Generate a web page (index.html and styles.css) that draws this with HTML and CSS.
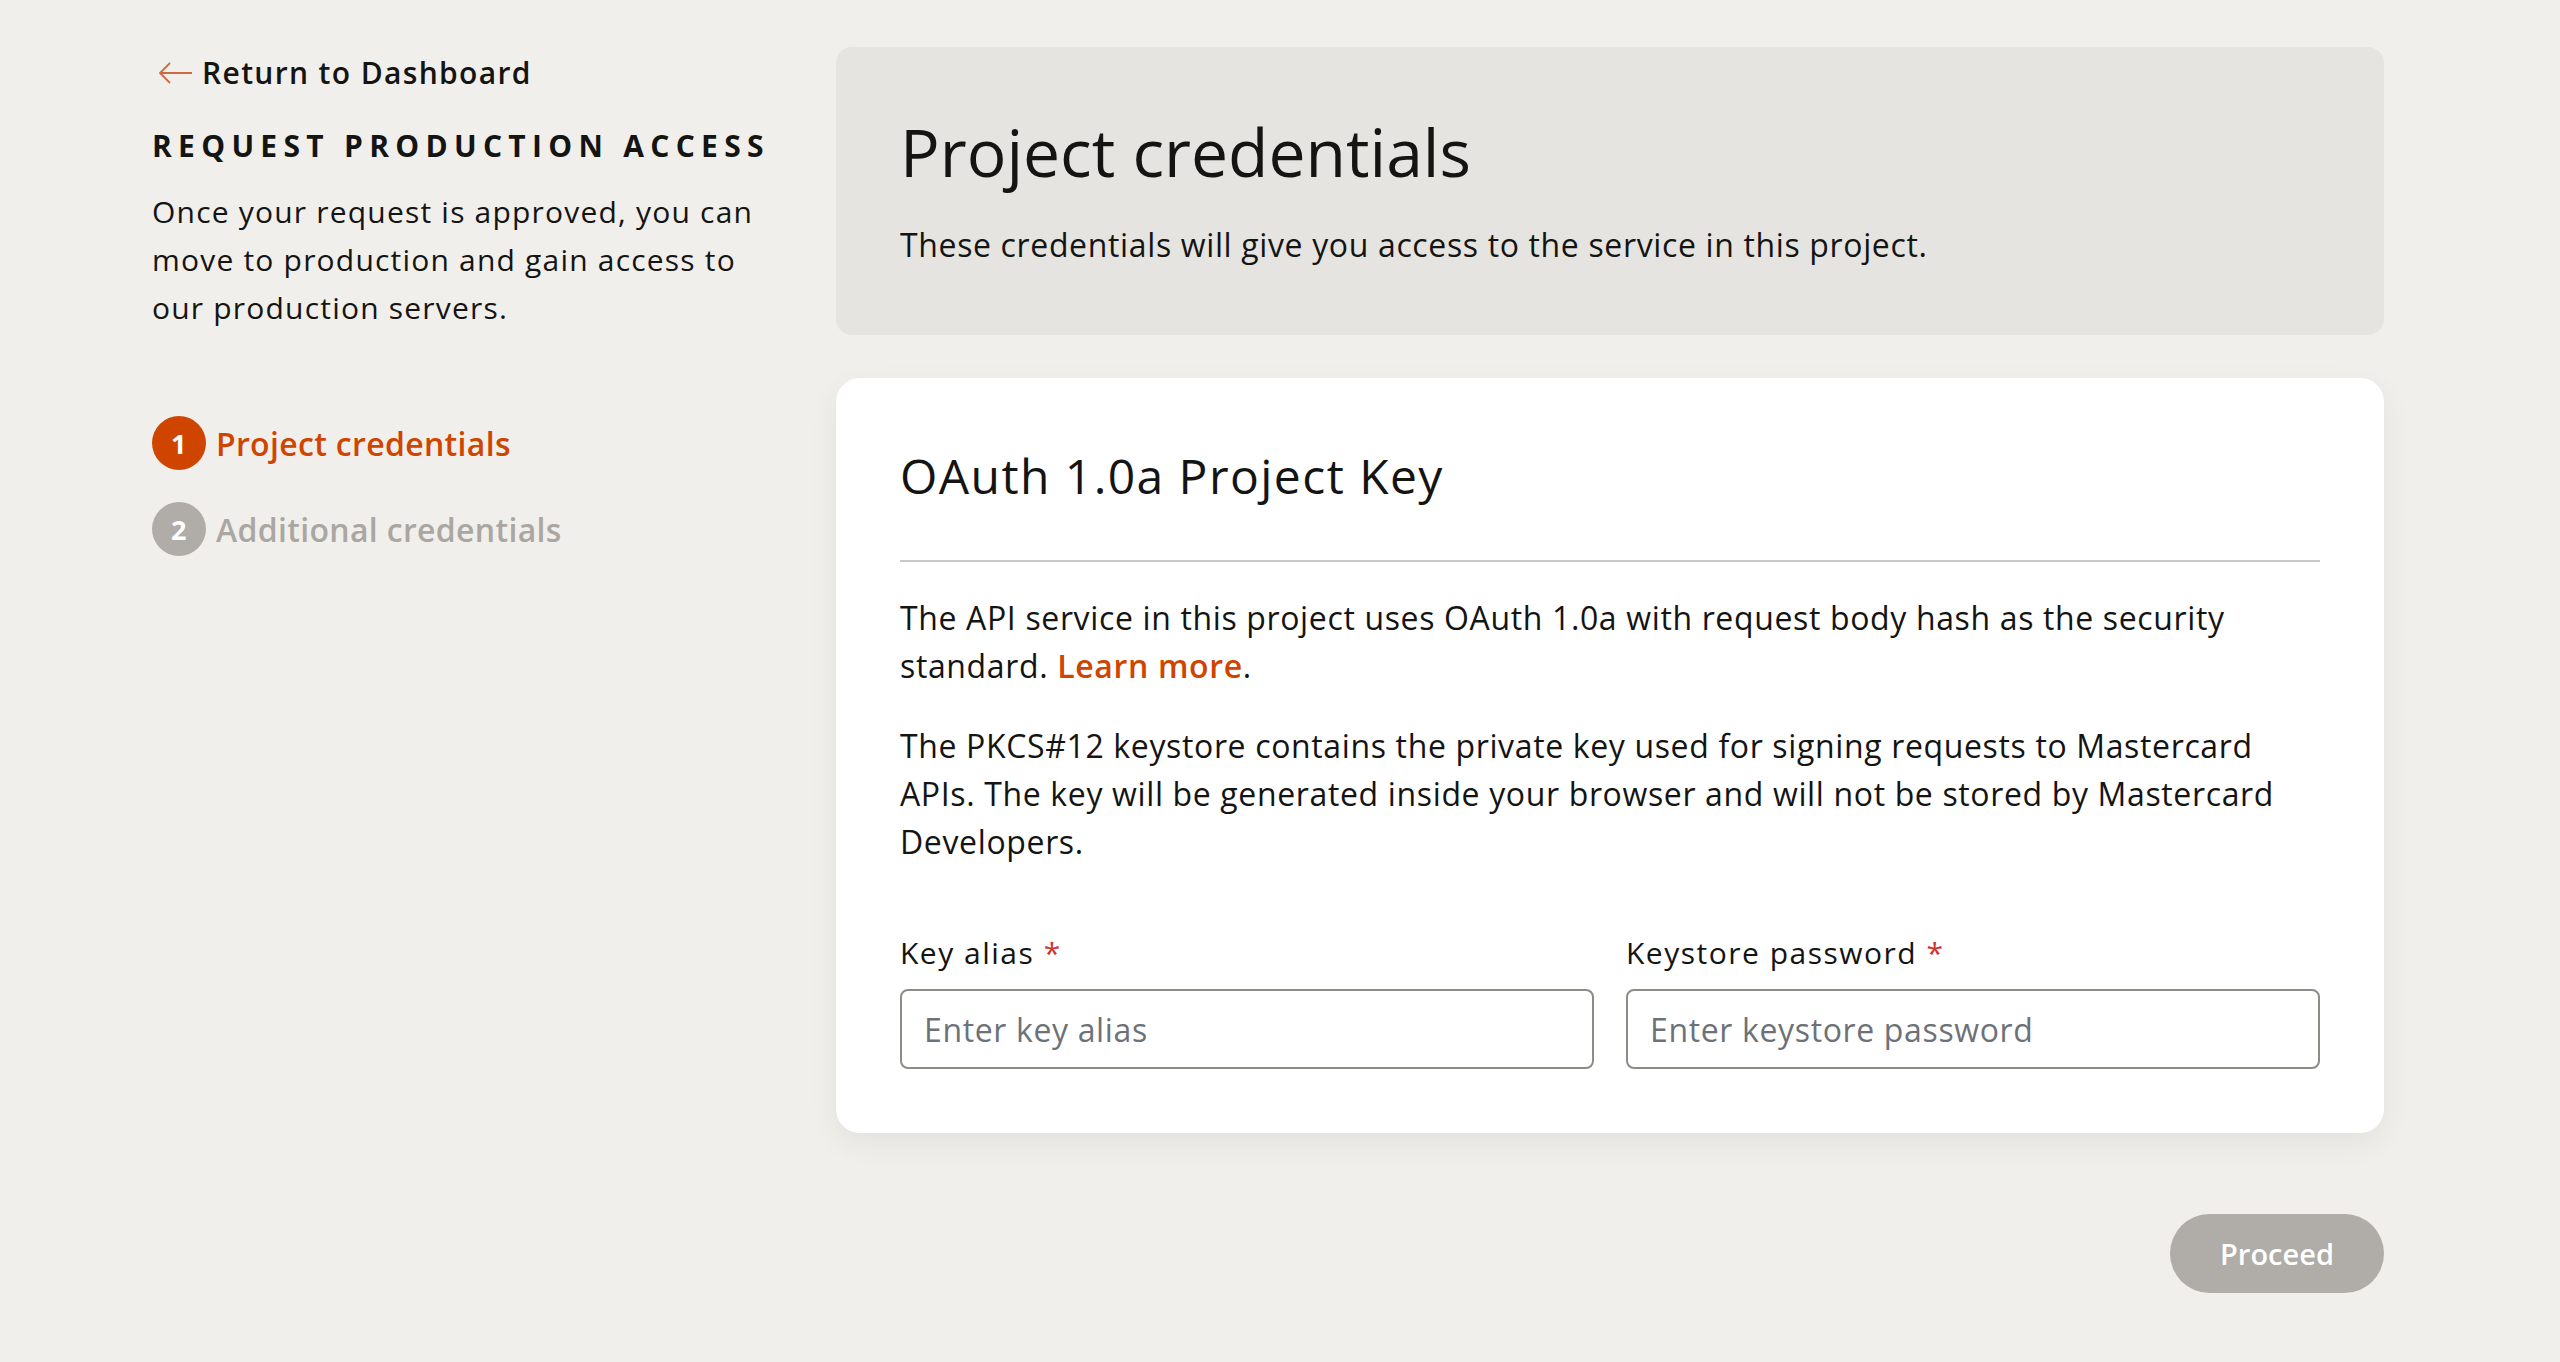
FILE: index.html
```html
<!DOCTYPE html>
<html lang="en">
<head>
    <meta charset="UTF-8">
    <title>Request Production Access</title>
    <link rel="stylesheet" href="styles.css">
</head>
<body>
    <div class="page">
        <aside class="sidebar">
            <a class="back-link" href="#">
                <svg class="back-arrow" width="34" height="22" viewBox="0 0 34 22">
                    <path d="M1 11 H33 M11 1 L1 11 L11 21" fill="none" stroke="#cf6a3f" stroke-width="1.8"/>
                </svg>
                Return to Dashboard
            </a>
            <h3 class="sidebar-title">Request production access</h3>
            <p class="sidebar-text">Once your request is approved, you can move to production and gain access to our production servers.</p>

            <ol class="steps">
                <li class="step active"><span class="step-num">1</span>Project credentials</li>
                <li class="step"><span class="step-num">2</span>Additional credentials</li>
            </ol>
        </aside>

        <main class="content">
            <section class="intro">
                <h1>Project credentials</h1>
                <p>These credentials will give you access to the service in this project.</p>
            </section>

            <section class="card">
                <div class="card-head">
                    <h2>OAuth 1.0a Project Key</h2>
                </div>
                <p>The API service in this project uses OAuth 1.0a with request body hash as the security standard. <a href="#">Learn more</a>.</p>
                <p>The PKCS#12 keystore contains the private key used for signing requests to Mastercard APIs. The key will be generated inside your browser and will not be stored by Mastercard Developers.</p>

                <form class="key-form">
                    <div class="field">
                        <label for="alias">Key alias <span class="req">*</span></label>
                        <input type="text" id="alias" placeholder="Enter key alias">
                    </div>
                    <div class="field">
                        <label for="keystore">Keystore password <span class="req">*</span></label>
                        <input type="password" id="keystore" placeholder="Enter keystore password">
                    </div>
                </form>
            </section>

            <div class="actions">
                <button class="btn-proceed" disabled>Proceed</button>
            </div>
        </main>
    </div>
</body>
</html>
```

FILE: styles.css
```css
:root {
    --fundo: #f1efeb;
    --painel: #e6e4e0;
    --texto: #141413;
    --laranja: #cf4500;
    --cinza: #b0aca7;
    --cinza-texto: #aaa7a2;
    --borda: #8e8c87;
}

body {
    font-family: "Open Sans", Lato, sans-serif;
    background-color: var(--fundo);
    color: var(--texto);
    margin: 0;
    padding: 0;
    font-size: 30px;
}

.page {
    display: grid;
    grid-template-columns: 620px 1548px;
    column-gap: 64px;
    padding: 47px 0 60px 152px;
}

/* coluna da esquerda */
.back-link {
    display: flex;
    align-items: center;
    gap: 9px;
    margin-top: 6px;
    color: var(--texto);
    text-decoration: none;
    font-weight: 600;
    font-size: 30px;
    line-height: 40px;
    letter-spacing: 0.045em;
}

.back-arrow {
    margin-left: 7px;
}

.sidebar-title {
    margin: 33px 0 0;
    font-size: 30px;
    font-weight: 700;
    letter-spacing: 0.21em;
    text-transform: uppercase;
    line-height: 40px;
}

.sidebar-text {
    margin: 22px 0 0;
    font-size: 30px;
    line-height: 48px;
    letter-spacing: 0.04em;
}

.steps {
    list-style: none;
    margin: 84px 0 0;
    padding: 0;
}

.step {
    display: flex;
    align-items: center;
    gap: 10px;
    height: 54px;
    margin-bottom: 32px;
    font-size: 32px;
    font-weight: 600;
    letter-spacing: 0.01em;
    color: var(--cinza-texto);
}

.step-num {
    display: flex;
    align-items: center;
    justify-content: center;
    width: 54px;
    height: 54px;
    border-radius: 50%;
    background-color: var(--cinza);
    color: #fff;
    font-size: 27px;
    font-weight: 700;
}

.step.active {
    color: var(--laranja);
}

.step.active .step-num {
    background-color: var(--laranja);
}

/* coluna principal */
.intro {
    background-color: var(--painel);
    border-radius: 16px;
    padding: 64px 64px 66px;
}

.intro h1 {
    margin: 0;
    font-size: 66px;
    font-weight: 400;
    line-height: 80px;
}

.intro p {
    margin: 30px 0 0;
    font-size: 32px;
    line-height: 48px;
    letter-spacing: 0.02em;
}

.card {
    margin-top: 43px;
    background-color: #fff;
    border-radius: 24px;
    padding: 68px 64px 64px;
    box-shadow: 0 10px 28px rgba(60, 50, 40, 0.07);
}

.card-head {
    border-bottom: 2px solid #c8c8c8;
    padding-bottom: 54px;
}

.card-head h2 {
    margin: 0;
    font-size: 48px;
    font-weight: 400;
    line-height: 60px;
    letter-spacing: 0.03em;
}

.card p {
    margin: 32px 0 0;
    font-size: 32px;
    line-height: 48px;
    letter-spacing: 0.02em;
}

.card a {
    color: var(--laranja);
    font-weight: 600;
    text-decoration: none;
}

.key-form {
    display: grid;
    grid-template-columns: 1fr 1fr;
    column-gap: 32px;
    margin-top: 65px;
}

.field label {
    display: block;
    font-size: 30px;
    line-height: 44px;
    letter-spacing: 0.05em;
    margin-bottom: 14px;
}

.req {
    color: #d0312d;
}

.field input {
    box-sizing: border-box;
    width: 100%;
    height: 80px;
    padding: 0 22px;
    border: 2px solid var(--borda);
    border-radius: 8px;
    font-family: inherit;
    font-size: 32px;
    letter-spacing: 0.02em;
    color: var(--texto);
    background-color: #fff;
}

.field input::placeholder {
    color: #6d7178;
}

.actions {
    display: flex;
    justify-content: flex-end;
    margin-top: 81px;
}

.btn-proceed {
    width: 214px;
    height: 79px;
    border: none;
    border-radius: 40px;
    background-color: var(--cinza);
    color: #fff;
    font-family: inherit;
    font-size: 29px;
    font-weight: 600;
}
```
